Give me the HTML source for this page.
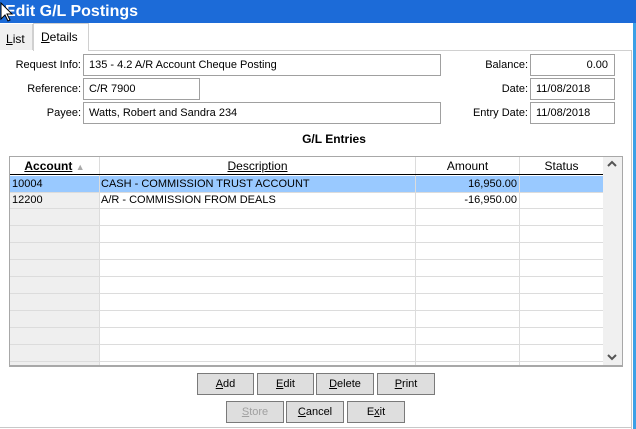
<!DOCTYPE html>
<html><head><style>
*{margin:0;padding:0;box-sizing:border-box}
body{width:636px;height:429px;background:#fff;font-family:"Liberation Sans",Arial,sans-serif;font-size:11px;color:#000;position:relative;overflow:hidden}
.a{position:absolute}
.title{left:0;top:0;width:636px;height:23px;background:#1c6bd8;color:#fff;font-weight:bold;font-size:16px;line-height:24px;padding-left:5px}
.lbl{text-align:right;line-height:23px}
.inp{border:1px solid #a0a0a0;background:#fff;height:22px;line-height:21px;padding-left:5px}
.hc{top:157px;height:18px;line-height:18px;font-size:12px;text-align:center}
.rl{height:1px;background:#dcdcdc;left:10px;width:593px}
.vl{width:1px;background:#dcdcdc;top:157px;height:208px}
.btn{border:1px solid #7a7a7a;background:#dedede;height:22px;line-height:21px;text-align:center}
u{text-decoration:underline}
</style></head><body>
<div class="a title">Edit G/L Postings</div>
<svg class="a" style="left:0;top:2px" width="14" height="20" viewBox="0 0 14 20"><path d="M1 1 L1 17 L5 13 L8 19 L10 18 L7 12 L12 12 Z" fill="#fff" stroke="#000" stroke-width="1"/></svg>
<div class="a" style="left:0;top:24px;width:33px;height:26px;background:#f0f0f0;border-right:1px solid #d0d0d0;font-size:12px;line-height:30px;padding-left:6px"><u>L</u>ist</div>
<div class="a" style="left:33px;top:23px;width:56px;height:28px;background:#fff;border:1px solid #d0d0d0;border-bottom:none;font-size:12px;line-height:26px;padding-left:7px"><u>D</u>etails</div>
<div class="a" style="left:88px;top:50px;width:543px;height:1px;background:#d0d0d0"></div>
<div class="a" style="left:631px;top:50px;width:1px;height:379px;background:#c8c8c8"></div>
<div class="a" style="left:633px;top:23px;width:3px;height:406px;background:#3ba0e6"></div>
<div class="a" style="left:0;top:427px;width:632px;height:1px;background:#c8c8c8"></div>
<div class="a lbl" style="left:0;top:54px;width:81px">Request Info:</div>
<div class="a inp" style="left:83px;top:54px;width:358px">135 - 4.2 A/R Account Cheque Posting</div>
<div class="a lbl" style="left:0;top:78px;width:81px">Reference:</div>
<div class="a inp" style="left:83px;top:78px;width:117px">C/R 7900</div>
<div class="a lbl" style="left:0;top:102px;width:81px">Payee:</div>
<div class="a inp" style="left:83px;top:102px;width:358px">Watts, Robert and Sandra 234</div>
<div class="a lbl" style="left:440px;top:54px;width:88px">Balance:</div>
<div class="a inp" style="left:530px;top:54px;width:85px;text-align:right;padding-right:6px">0.00</div>
<div class="a lbl" style="left:440px;top:78px;width:88px">Date:</div>
<div class="a inp" style="left:530px;top:78px;width:85px">11/08/2018</div>
<div class="a lbl" style="left:440px;top:102px;width:88px">Entry Date:</div>
<div class="a inp" style="left:530px;top:102px;width:85px">11/08/2018</div>
<div class="a" style="left:300px;top:132px;width:68px;text-align:center;font-weight:bold;font-size:12px">G/L Entries</div>
<div class="a" style="left:9px;top:156px;width:614px;height:211px;border:1px solid #a8a8a8;border-bottom:2px solid #a8a8a8;background:#fff"></div>
<div class="a" style="left:10px;top:192px;width:89px;height:173px;background:#efefef"></div>
<div class="a" style="left:10px;top:176px;width:593px;height:16px;background:#99c9ff"></div>
<div class="a" style="left:603px;top:157px;width:19px;height:208px;background:#f0f0f0"></div>
<svg class="a" style="left:607px;top:160px" width="10" height="8"><path d="M1 6 L5 2 L9 6" stroke="#555" stroke-width="2" fill="none"/></svg>
<svg class="a" style="left:607px;top:353px" width="10" height="8"><path d="M1 2 L5 6 L9 2" stroke="#555" stroke-width="2" fill="none"/></svg>
<div class="a vl" style="left:99px"></div>
<div class="a vl" style="left:415px"></div>
<div class="a vl" style="left:519px"></div>
<div class="a" style="left:10px;top:174px;width:593px;height:1px;background:#000"></div>
<div class="a rl" style="top:192px"></div>
<div class="a rl" style="top:208px"></div>
<div class="a rl" style="top:225px"></div>
<div class="a rl" style="top:242px"></div>
<div class="a rl" style="top:259px"></div>
<div class="a rl" style="top:276px"></div>
<div class="a rl" style="top:293px"></div>
<div class="a rl" style="top:310px"></div>
<div class="a rl" style="top:327px"></div>
<div class="a rl" style="top:344px"></div>
<div class="a rl" style="top:361px"></div>
<div class="a hc" style="left:10px;width:89px"><b><u>Account</u></b> <span style="color:#aaa;font-size:9px">&#9650;</span></div>
<div class="a hc" style="left:100px;width:315px"><u>Description</u></div>
<div class="a hc" style="left:416px;width:103px">Amount</div>
<div class="a hc" style="left:520px;width:83px">Status</div>
<div class="a" style="left:12px;top:177px;line-height:15px">10004</div>
<div class="a" style="left:101px;top:177px;line-height:15px">CASH - COMMISSION TRUST ACCOUNT</div>
<div class="a" style="left:416px;top:177px;width:101px;text-align:right;line-height:15px">16,950.00</div>
<div class="a" style="left:12px;top:193px;line-height:15px">12200</div>
<div class="a" style="left:101px;top:193px;line-height:15px">A/R - COMMISSION FROM DEALS</div>
<div class="a" style="left:416px;top:193px;width:101px;text-align:right;line-height:15px">-16,950.00</div>
<div class="a btn" style="left:197px;top:373px;width:57px"><u>A</u>dd</div>
<div class="a btn" style="left:257px;top:373px;width:57px"><u>E</u>dit</div>
<div class="a btn" style="left:316px;top:373px;width:58px"><u>D</u>elete</div>
<div class="a btn" style="left:377px;top:373px;width:58px"><u>P</u>rint</div>
<div class="a btn" style="left:226px;top:401px;width:58px;color:#a0a0a0"><u>S</u>tore</div>
<div class="a btn" style="left:286px;top:401px;width:58px"><u>C</u>ancel</div>
<div class="a btn" style="left:347px;top:401px;width:58px">E<u>x</u>it</div>
</body></html>
